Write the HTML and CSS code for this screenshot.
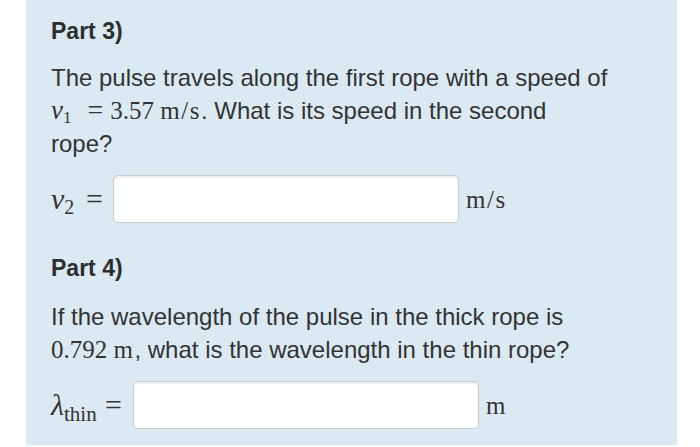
FILE: index.html
```html
<!DOCTYPE html>
<html>
<head>
<meta charset="utf-8">
<link rel="stylesheet" href="styles.css">
</head>
<body>
<div class="panel">
  <section class="part">
    <h2 class="part-title">Part 3)</h2>
    <p class="question">The pulse travels along the first rope with a speed of <span class="math"><span class="var">v</span><sub class="sub">1</sub><span class="eq">=</span>3.57 <span class="unit-text">m/s</span></span>. What is its speed in the second rope?</p>
    <div class="answer-row">
      <span class="math label"><span class="sym"><span class="var">v</span><sub class="sub">2</sub></span><span class="eq">=</span></span>
      <input class="answer" type="text">
      <span class="math unit unit-text">m/s</span>
    </div>
  </section>
  <section class="part part-two">
    <h2 class="part-title">Part 4)</h2>
    <p class="question">If the wavelength of the pulse in the thick rope is <span class="math">0.792 <span class="unit-text">m</span></span>, what is the wavelength in the thin rope?</p>
    <div class="answer-row">
      <span class="math label label-wide"><span class="sym"><span class="var">λ</span><sub class="sub sub-text">thin</sub></span><span class="eq">=</span></span>
      <input class="answer" type="text">
      <span class="math unit unit-text">m</span>
    </div>
  </section>
</div>
</body>
</html>
```

FILE: styles.css
```css
html, body {
  margin: 0;
  padding: 0;
  background: #ffffff;
}

.panel {
  margin-left: 26px;
  width: 651px;
  height: 445px;
  box-sizing: border-box;
  background: #dbe9f3;
  padding: 17px 0 0 25px;
  color: #333333;
  font-family: "Liberation Sans", Arial, sans-serif;
}

.part-title {
  margin: 0;
  font-size: 23px;
  line-height: 28px;
  font-weight: bold;
  color: #2e2e2e;
}

.question {
  margin: 16px 0 0 0;
  width: 562px;
  font-size: 24px;
  line-height: 33px;
}

.math {
  font-family: "Liberation Serif", "Times New Roman", serif;
  font-size: 25px;
}

.unit-text {
  letter-spacing: 1.5px;
}

.var {
  font-style: italic;
  font-size: 27px;
}

.sub {
  font-size: 17px;
  vertical-align: -4px;
  line-height: 0;
  letter-spacing: 0;
}

.eq {
  font-size: 28px;
  line-height: 1;
  margin: 0 7px 0 16px;
}

.answer-row {
  display: flex;
  align-items: center;
  margin-top: 15px;
  height: 48px;
}

.label {
  display: flex;
  align-items: baseline;
  justify-content: space-between;
  width: 62px;
  padding-right: 10px;
  box-sizing: border-box;
  flex: none;
}

.label .var {
  font-size: 30px;
}

.label .sub {
  font-size: 20px;
  vertical-align: -5px;
}

.label .eq {
  font-size: 30px;
  margin: 0;
}

.label-wide {
  width: 82px;
  padding-right: 11px;
}

.label-wide .sub-text {
  font-size: 21px;
  vertical-align: -6px;
}

.sym {
  white-space: nowrap;
}

.answer {
  box-sizing: border-box;
  width: 346px;
  height: 48px;
  margin: 0;
  border: 1px solid #c9ccce;
  border-radius: 5px;
  background: #ffffff;
  box-shadow: inset 0 2px 2px rgba(0, 0, 0, 0.07);
  outline: none;
}

.unit {
  margin-left: 7px;
  position: relative;
  top: 1px;
}

.part-two {
  margin-top: 31px;
}

.part-two .question {
  margin-top: 18px;
}
```
